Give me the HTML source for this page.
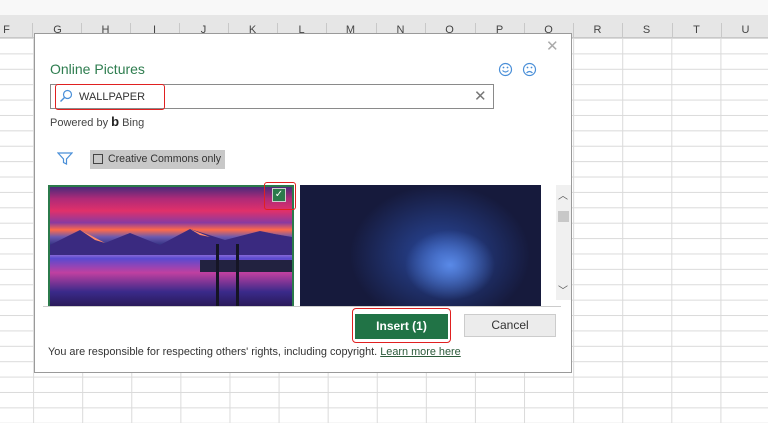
<!DOCTYPE html>
<html><head><style>
*{margin:0;padding:0;box-sizing:border-box}
body{width:768px;height:423px;overflow:hidden;background:#fff;font-family:"Liberation Sans",sans-serif;position:relative}
.abs{position:absolute}
.grid{left:0;top:38px;width:768px;height:385px;
background-image:linear-gradient(#dadada 1px,transparent 1px),linear-gradient(90deg,#dadada 1px,transparent 1px);
background-size:100% 15.4px,49.1px 100%;background-position:0 0,-16px 0}
.hdr{left:0;top:15px;width:768px;height:23px;background:#e6e6e6;border-bottom:1px solid #c8c8c8}
.hdr span{position:absolute;top:9px;font-size:11px;color:#444;width:49px;text-align:center}
.vl{position:absolute;top:8px;width:1px;height:15px;background:#c8c8c8}
.dlg{left:34px;top:33px;width:538px;height:340px;background:#fff;border:1px solid #9a9a9a}
</style></head><body>
<div class="abs" style="left:0;top:0;width:768px;height:15px;background:#f8f8f8"></div>
<div class="abs grid"></div>
<div class="abs hdr">
<span style="left:-18px">F</span><span style="left:33px">G</span><span style="left:81px">H</span><span style="left:130px">I</span><span style="left:179px">J</span><span style="left:228px">K</span><span style="left:277px">L</span><span style="left:326px">M</span><span style="left:376px">N</span><span style="left:425px">O</span><span style="left:475px">P</span><span style="left:524px">Q</span><span style="left:573px">R</span><span style="left:622px">S</span><span style="left:672px">T</span><span style="left:721px">U</span>
<i class="vl" style="left:32px"></i><i class="vl" style="left:81px"></i><i class="vl" style="left:130px"></i><i class="vl" style="left:179px"></i><i class="vl" style="left:228px"></i><i class="vl" style="left:277px"></i><i class="vl" style="left:326px"></i><i class="vl" style="left:376px"></i><i class="vl" style="left:425px"></i><i class="vl" style="left:475px"></i><i class="vl" style="left:524px"></i><i class="vl" style="left:573px"></i><i class="vl" style="left:622px"></i><i class="vl" style="left:672px"></i><i class="vl" style="left:721px"></i>
</div>
<div class="abs dlg"></div>
<div class="abs" style="left:546px;top:37px;color:#aaa;font-size:15px">✕</div>
<div class="abs" style="left:50px;top:61px;font-size:14px;color:#2e7d4f">Online Pictures</div>
<svg class="abs" style="left:498px;top:62px" width="40" height="16"><g fill="none" stroke="#4a8fd8" stroke-width="1.2"><circle cx="7.5" cy="7.5" r="6"/><circle cx="31.5" cy="7.5" r="6"/><path d="M4.5 8.5q3 3 6 0M28.5 11q3-3 6 0"/></g><g fill="#4a8fd8"><circle cx="5.5" cy="5.5" r=".9"/><circle cx="9.5" cy="5.5" r=".9"/><circle cx="29.5" cy="5.5" r=".9"/><circle cx="33.5" cy="5.5" r=".9"/></g></svg>
<div class="abs" style="left:50px;top:84px;width:444px;height:25px;border:1px solid #8a8a8a"></div>
<div class="abs" style="left:55px;top:84px;width:110px;height:26px;border:1.5px solid #e02020;border-radius:3px"></div>
<svg class="abs" style="left:59px;top:89px" width="14" height="14"><circle cx="8.5" cy="5.5" r="4" fill="none" stroke="#4a8fd8" stroke-width="1.2"/><path d="M5.5 8.5L1.5 12.5" stroke="#4a8fd8" stroke-width="1.4"/></svg>
<div class="abs" style="left:79px;top:91px;font-size:11px;color:#333">WALLPAPER</div>
<div class="abs" style="left:474px;top:87px;font-size:15px;color:#777">✕</div>
<div class="abs" style="left:50px;top:114px;font-size:11px;color:#444">Powered by <b style="font-size:13px;color:#222">b</b> Bing</div>
<svg class="abs" style="left:57px;top:152px" width="16" height="14"><path d="M1 1h14l-5.5 6v5l-3-1.5V7z" fill="none" stroke="#4a8fd8" stroke-width="1.2"/></svg>
<div class="abs" style="left:90px;top:150px;width:135px;height:19px;background:#c8c8c8"></div>
<div class="abs" style="left:93px;top:154px;width:10px;height:10px;border:1px solid #444"></div>
<div class="abs" style="left:108px;top:153px;font-size:10.6px;color:#333">Creative Commons only</div>
<div class="abs" style="left:48px;top:185px;width:246px;height:121px;border:2px solid #2b7a4b;border-bottom:none;background:
linear-gradient(180deg,#4b2a7a 0%,#b02a78 10%,#e0306a 20%,#8a3aa0 30%,#ff6a4a 36%,#6a5ab0 42%,#2a2a7a 50%,#d8a0e0 52%,#5a4ad0 60%,#c040a0 72%,#3a2a8a 88%,#2a1a5a 100%)"></div>
<svg class="abs" style="left:50px;top:225px" width="242" height="30"><path d="M0 20L30 5L55 18L80 8L110 20L140 4L175 15L210 6L242 12V30H0Z" fill="#3a2a80"/><path d="M30 5L40 10L55 18L45 15ZM140 4L150 10L160 12ZM210 6L225 9L242 12" fill="#ff8a6a"/></svg>
<div class="abs" style="left:200px;top:260px;width:92px;height:12px;background:#222240"></div>
<div class="abs" style="left:216px;top:244px;width:3px;height:62px;background:#151525"></div>
<div class="abs" style="left:236px;top:244px;width:3px;height:62px;background:#151525"></div>
<div class="abs" style="left:264px;top:182px;width:32px;height:28px;border:1.5px solid #e02020;border-radius:3px"></div>
<div class="abs" style="left:272px;top:188px;width:14px;height:14px;background:#2b7a4b;border:1px solid #ccc;color:#fff;font-size:10px;text-align:center;line-height:12px">✓</div>
<div class="abs" style="left:300px;top:185px;width:241px;height:121px;background:
radial-gradient(ellipse 45px 35px at 150px 80px,#5a8ae8,transparent),radial-gradient(ellipse 90px 70px at 140px 70px,#2a4aa0,transparent),#161a3c"></div>
<div class="abs" style="left:556px;top:185px;width:15px;height:115px;background:#f0f0f0"></div>
<div class="abs" style="left:558px;top:211px;width:11px;height:11px;background:#c8c8c8"></div>
<div class="abs" style="left:558px;top:187px;font-size:10px;color:#555">︿</div>
<div class="abs" style="left:558px;top:282px;font-size:10px;color:#555">﹀</div>
<div class="abs" style="left:43px;top:306px;width:518px;height:1px;background:#ccc"></div>
<div class="abs" style="left:352px;top:308px;width:99px;height:35px;border:1.5px solid #e02020;border-radius:4px"></div>
<div class="abs" style="left:355px;top:314px;width:93px;height:25px;background:#217346;color:#fff;font-size:12px;font-weight:bold;text-align:center;line-height:25px">Insert (1)</div>
<div class="abs" style="left:464px;top:314px;width:92px;height:23px;background:#ececec;border:1px solid #ccc;color:#333;font-size:12px;text-align:center;line-height:21px">Cancel</div>
<div class="abs" style="left:48px;top:346px;font-size:10.9px;color:#333">You are responsible for respecting others' rights, including copyright. <span style="text-decoration:underline;color:#2b5a3a">Learn more here</span></div>
</body></html>
